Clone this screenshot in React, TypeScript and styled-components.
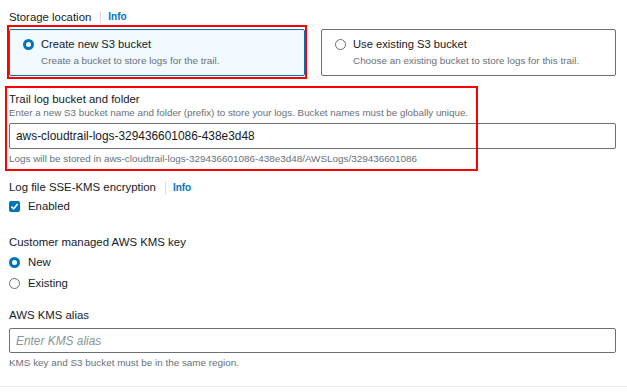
import styled, { createGlobalStyle } from "styled-components";

const GlobalStyle = createGlobalStyle`
  html, body {
    margin: 0;
    padding: 0;
    background: #ffffff;
  }
  body {
    font-family: "Liberation Sans", Arial, sans-serif;
    color: #16191f;
  }
  * {
    box-sizing: border-box;
  }
`;

const App = () => {
  return (
    <Page>
      <GlobalStyle />
      <Form>
        <LabelRow>
          Storage location
          <Separator />
          <InfoLink>Info</InfoLink>
        </LabelRow>
        <Tiles>
          <Tile $selected>
            <Mark $top={-5} $left={-3} $right={-3} $bottom={-4} />
            <RadioDot $checked $inTile />
            <TileText>
              <TileTitle>Create new S3 bucket</TileTitle>
              <TileDesc>Create a bucket to store logs for the trail.</TileDesc>
            </TileText>
          </Tile>
          <Tile>
            <RadioDot $inTile />
            <TileText>
              <TileTitle>Use existing S3 bucket</TileTitle>
              <TileDesc>Choose an existing bucket to store logs for this trail.</TileDesc>
            </TileText>
          </Tile>
        </Tiles>

        <Field $top={16}>
          <Mark $top={-6} $left={-4} $right={138} $bottom={-6} />
          <FieldLabel>Trail log bucket and folder</FieldLabel>
          <Description>
            Enter a new S3 bucket name and folder (prefix) to store your logs. Bucket names must be globally unique.
          </Description>
          <TextInput $top={4} readOnly value="aws-cloudtrail-logs-329436601086-438e3d48" />
          <Helper>Logs will be stored in aws-cloudtrail-logs-329436601086-438e3d48/AWSLogs/329436601086</Helper>
        </Field>

        <Field $top={15}>
          <LabelRow $compact>
            Log file SSE-KMS encryption
            <Separator />
            <InfoLink>Info</InfoLink>
          </LabelRow>
          <OptionRow $top={4}>
            <Checkbox>
              <svg width="9" height="9" viewBox="0 0 9 9">
                <polyline points="1.4,4.6 3.6,6.8 7.6,2" fill="none" stroke="#fff" strokeWidth="1.6" />
              </svg>
            </Checkbox>
            Enabled
          </OptionRow>
        </Field>

        <Field $top={21}>
          <FieldLabel>Customer managed AWS KMS key</FieldLabel>
          <OptionRow $top={5}>
            <RadioDot $checked />
            New
          </OptionRow>
          <OptionRow $top={6}>
            <RadioDot />
            Existing
          </OptionRow>
        </Field>

        <Field $top={17}>
          <FieldLabel>AWS KMS alias</FieldLabel>
          <TextInput $top={5} $height={25} placeholder="Enter KMS alias" />
          <Helper>KMS key and S3 bucket must be in the same region.</Helper>
        </Field>
      </Form>
      <Divider />
    </Page>
  );
};

const Page = styled.div`
  width: 627px;
  height: 392px;
  overflow: hidden;
  background: #ffffff;
`;

const Form = styled.div`
  display: flex;
  flex-direction: column;
  padding: 9px 11px 0 9px;
`;

const LabelRow = styled.div<{ $compact?: boolean }>`
  display: flex;
  align-items: center;
  height: ${(p) => (p.$compact ? 15 : 16)}px;
  font-size: 11.4px;
  line-height: ${(p) => (p.$compact ? 15 : 16)}px;
  color: #16191f;
`;

const Separator = styled.span`
  width: 1px;
  height: 12px;
  margin: 0 7px 0 9px;
  background: #d5dbdb;
`;

const InfoLink = styled.a`
  font-size: 10px;
  font-weight: bold;
  color: #0073bb;
  cursor: pointer;
`;

const Tiles = styled.div`
  display: grid;
  grid-template-columns: 296px 295px;
  column-gap: 16px;
  margin-top: 4px;
`;

const Tile = styled.label<{ $selected?: boolean }>`
  position: relative;
  display: flex;
  align-items: flex-start;
  gap: 7px;
  height: 47px;
  padding: 6px 12px 0 13px;
  border: 1px solid ${(p) => (p.$selected ? "#0073bb" : "#687078")};
  border-radius: 2px;
  background: ${(p) => (p.$selected ? "#f1faff" : "#ffffff")};
`;

const Mark = styled.span<{ $top: number; $left: number; $right: number; $bottom: number }>`
  position: absolute;
  top: ${(p) => p.$top}px;
  left: ${(p) => p.$left}px;
  right: ${(p) => p.$right}px;
  bottom: ${(p) => p.$bottom}px;
  border: 2px solid #ff0000;
  pointer-events: none;
`;

const RadioDot = styled.span<{ $checked?: boolean; $inTile?: boolean }>`
  flex: none;
  width: 11px;
  height: 11px;
  margin-top: ${(p) => (p.$inTile ? 3 : 0)}px;
  border-radius: 50%;
  background: #ffffff;
  border: ${(p) => (p.$checked ? "3.5px solid #0073bb" : "1px solid #687078")};
`;

const TileText = styled.div`
  display: flex;
  flex-direction: column;
`;

const TileTitle = styled.div`
  font-size: 11.2px;
  line-height: 16px;
  color: #16191f;
`;

const TileDesc = styled.div`
  margin-top: 2px;
  font-size: 9.9px;
  line-height: 14px;
  color: #687078;
`;

const Field = styled.div<{ $top: number }>`
  position: relative;
  display: flex;
  flex-direction: column;
  margin-top: ${(p) => p.$top}px;
`;

const FieldLabel = styled.div`
  font-size: 11.4px;
  line-height: 15px;
  color: #16191f;
`;

const Description = styled.div`
  font-size: 9.8px;
  line-height: 12px;
  color: #687078;
`;

const Helper = styled.div`
  margin-top: 4px;
  font-size: 9.9px;
  line-height: 12px;
  color: #687078;
`;

const TextInput = styled.input<{ $top: number; $height?: number }>`
  display: block;
  width: 100%;
  height: ${(p) => p.$height ?? 26}px;
  margin: ${(p) => p.$top}px 0 0 0;
  padding: 0 6px;
  border: 1px solid #687078;
  border-radius: 2px;
  background: #ffffff;
  font-family: "Liberation Sans", Arial, sans-serif;
  font-size: 11.9px;
  color: #16191f;
  outline: none;

  &::placeholder {
    font-style: italic;
    color: #879596;
  }
`;

const OptionRow = styled.label<{ $top: number }>`
  display: flex;
  align-items: center;
  gap: 8px;
  height: 15px;
  margin-top: ${(p) => p.$top}px;
  font-size: 11.4px;
  line-height: 15px;
  color: #16191f;
`;

const Checkbox = styled.span`
  flex: none;
  display: flex;
  align-items: center;
  justify-content: center;
  width: 11px;
  height: 11px;
  border-radius: 2px;
  background: #0073bb;
`;

const Divider = styled.div`
  height: 1px;
  margin-top: 17px;
  background: #eaeded;
`;

export default App;
